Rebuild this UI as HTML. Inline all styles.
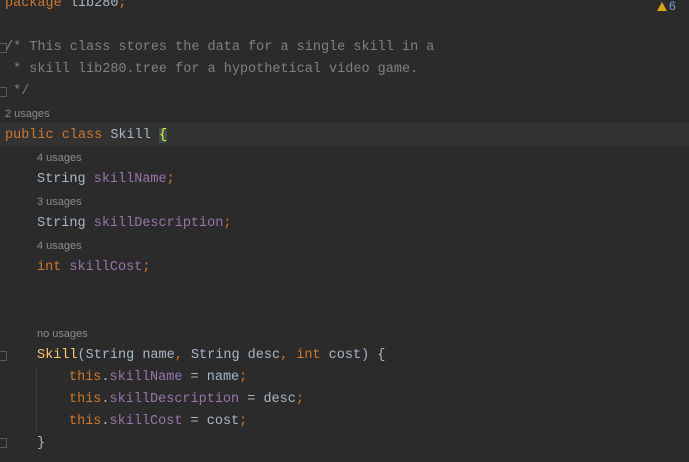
<!DOCTYPE html>
<html><head><style>
body{margin:0;width:689px;height:460px;background:#2b2b2b;overflow:hidden;position:relative;font-family:"Liberation Mono",monospace;font-size:13.5px;color:#a9b7c6}
#w{position:absolute;left:0;top:2px;width:689px;height:460px}
.l{position:absolute;left:5px;height:22px;line-height:22px;white-space:pre}
.u{font-family:"Liberation Sans",sans-serif;font-size:11px;color:#8c8c8c}
.k{color:#cc7832}.c{color:#808080}.f{color:#9876aa}.m{color:#ffc66d}
.hl{position:absolute;left:0;top:121px;width:689px;height:22px;background:#323232}
.g{position:absolute;left:0;width:6px;height:8px;border:1px solid #5a5a5a;border-left:none}
</style></head><body><div id="w">
<div class="hl"></div>
<div class="l k" style="top:-9px">package <span style="color:#a9b7c6">lib280</span>;</div>
<div style="position:absolute;left:657px;top:0px;width:0;height:0;border-left:5px solid transparent;border-right:5px solid transparent;border-bottom:9px solid #d9a41e"></div>
<div style="position:absolute;left:669px;top:-4px;font-family:'Liberation Sans',sans-serif;font-size:12px;line-height:16px;color:#6fa3d8">6</div>
<div class="g" style="top:41px"></div>
<div class="l c" style="top:35px">/* This class stores the data for a single skill in a</div>
<div class="l c" style="top:57px"> * skill lib280.tree for a hypothetical video game.</div>
<div class="g" style="top:85px"></div>
<div class="l c" style="top:79px"> */</div>
<div class="l u" style="top:101px">2 usages</div>
<div class="l" style="top:123px"><span class="k">public class </span>Skill <span style="color:#ffef28;background:#3b514d">{</span></div>
<div class="l u" style="top:145px;left:37px">4 usages</div>
<div class="l" style="top:167px;left:37px">String <span class="f">skillName</span><span class="k">;</span></div>
<div class="l u" style="top:189px;left:37px">3 usages</div>
<div class="l" style="top:211px;left:37px">String <span class="f">skillDescription</span><span class="k">;</span></div>
<div class="l u" style="top:233px;left:37px">4 usages</div>
<div class="l" style="top:255px;left:37px"><span class="k">int </span><span class="f">skillCost</span><span class="k">;</span></div>
<div class="l u" style="top:321px;left:37px">no usages</div>
<div class="g" style="top:349px"></div>
<div class="l" style="top:343px;left:37px"><span class="m">Skill</span>(String name<span class="k">, </span>String desc<span class="k">, int </span>cost) {</div>
<div style="position:absolute;left:36px;top:364px;width:1px;height:66px;background:#3c3c3c"></div>
<div class="l" style="top:365px;left:69px"><span class="k">this</span>.<span class="f">skillName</span> = name<span class="k">;</span></div>
<div class="l" style="top:387px;left:69px"><span class="k">this</span>.<span class="f">skillDescription</span> = desc<span class="k">;</span></div>
<div class="l" style="top:409px;left:69px"><span class="k">this</span>.<span class="f">skillCost</span> = cost<span class="k">;</span></div>
<div class="g" style="top:436px"></div>
<div class="l" style="top:431px;left:37px">}</div>
</div></body></html>
